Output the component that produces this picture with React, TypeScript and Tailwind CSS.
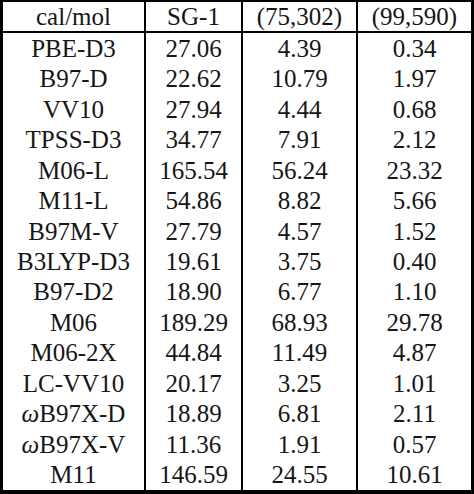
import React from "react";

const rows: [React.ReactNode, string, string, string][] = [
  ["PBE-D3", "27.06", "4.39", "0.34"],
  ["B97-D", "22.62", "10.79", "1.97"],
  ["VV10", "27.94", "4.44", "0.68"],
  ["TPSS-D3", "34.77", "7.91", "2.12"],
  ["M06-L", "165.54", "56.24", "23.32"],
  ["M11-L", "54.86", "8.82", "5.66"],
  ["B97M-V", "27.79", "4.57", "1.52"],
  ["B3LYP-D3", "19.61", "3.75", "0.40"],
  ["B97-D2", "18.90", "6.77", "1.10"],
  ["M06", "189.29", "68.93", "29.78"],
  ["M06-2X", "44.84", "11.49", "4.87"],
  ["LC-VV10", "20.17", "3.25", "1.01"],
  [<><i>ω</i>B97X-D</>, "18.89", "6.81", "2.11"],
  [<><i>ω</i>B97X-V</>, "11.36", "1.91", "0.57"],
  ["M11", "146.59", "24.55", "10.61"],
];

const cols = "grid grid-cols-[141px_97px_115px_115px]";

export default function App() {
  return (
    <div className="w-[474px] h-[494px] bg-white text-[#161616] text-[25px] leading-none font-['Liberation_Serif','Times_New_Roman',serif]">
      <div className="w-full h-full border-l-[3px] border-r-[3px] border-t-2 border-b-4 border-black flex flex-col">
        <div className={`${cols} h-[31px] border-b-2 border-black`}>
          <div className="flex items-center justify-center">cal/mol</div>
          <div className="flex items-center justify-center border-l-2 border-black">SG-1</div>
          <div className="flex items-center justify-center border-l-2 border-black">(75,302)</div>
          <div className="flex items-center justify-center border-l-2 border-black">(99,590)</div>
        </div>
        <div className={`${cols} flex-1 grid-rows-[repeat(15,1fr)]`}>
          {rows.map((r, i) => (
            <React.Fragment key={i}>
              <div className="flex items-center justify-center">{r[0]}</div>
              <div className="flex items-center justify-center border-l-2 border-black">{r[1]}</div>
              <div className="flex items-center justify-center border-l-2 border-black">{r[2]}</div>
              <div className="flex items-center justify-center border-l-2 border-black">{r[3]}</div>
            </React.Fragment>
          ))}
        </div>
      </div>
    </div>
  );
}
